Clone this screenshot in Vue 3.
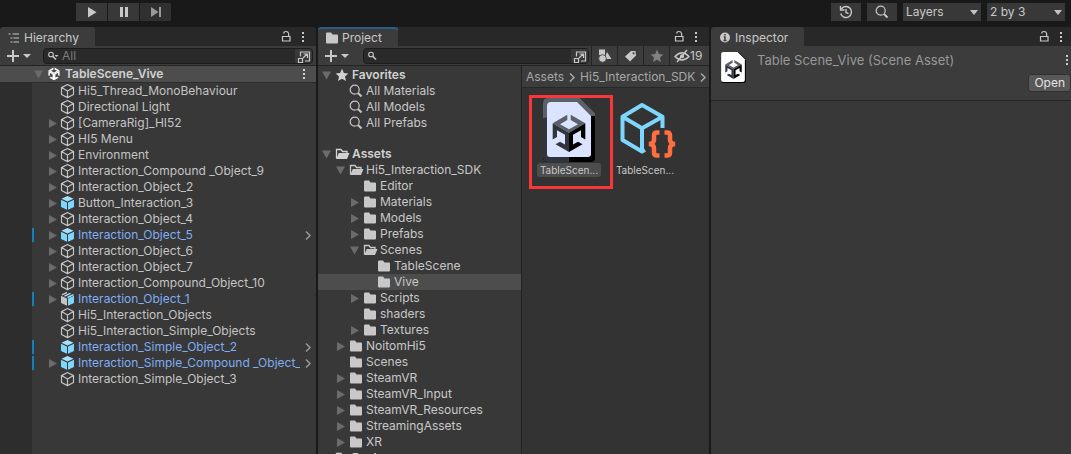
<script setup>
import { ref } from 'vue'

const objects = [
  { name: 'Hi5_Thread_MonoBehaviour', icon: 'cube' },
  { name: 'Directional Light', icon: 'cube' },
  { name: '[CameraRig]_HI52', icon: 'cube', parent: true },
  { name: 'HI5 Menu', icon: 'cube', parent: true },
  { name: 'Environment', icon: 'cube', parent: true },
  { name: 'Interaction_Compound _Object_9', icon: 'cube', parent: true },
  { name: 'Interaction_Object_2', icon: 'cube', parent: true },
  { name: 'Button_Interaction_3', icon: 'prefab', parent: true },
  { name: 'Interaction_Object_4', icon: 'cube', parent: true },
  { name: 'Interaction_Object_5', icon: 'prefab', parent: true, linked: true, open: true },
  { name: 'Interaction_Object_6', icon: 'cube', parent: true },
  { name: 'Interaction_Object_7', icon: 'cube', parent: true },
  { name: 'Interaction_Compound_Object_10', icon: 'cube', parent: true },
  { name: 'Interaction_Object_1', icon: 'variant', parent: true, linked: true },
  { name: 'Hi5_Interaction_Objects', icon: 'cube' },
  { name: 'Hi5_Interaction_Simple_Objects', icon: 'cube' },
  { name: 'Interaction_Simple_Object_2', icon: 'prefab', linked: true, open: true },
  { name: 'Interaction_Simple_Compound _Object_1', icon: 'prefab', parent: true, linked: true, open: true },
  { name: 'Interaction_Simple_Object_3', icon: 'cube' }
]

const folders = [
  { name: 'Favorites', icon: 'star', depth: 0, state: 'down', bold: true },
  { name: 'All Materials', icon: 'lens', depth: 1 },
  { name: 'All Models', icon: 'lens', depth: 1 },
  { name: 'All Prefabs', icon: 'lens', depth: 1, last: true },
  { name: 'Assets', icon: 'folder-open', depth: 0, state: 'down', bold: true },
  { name: 'Hi5_Interaction_SDK', icon: 'folder-open', depth: 1, state: 'down' },
  { name: 'Editor', icon: 'folder', depth: 2 },
  { name: 'Materials', icon: 'folder', depth: 2, state: 'right' },
  { name: 'Models', icon: 'folder', depth: 2, state: 'right' },
  { name: 'Prefabs', icon: 'folder', depth: 2, state: 'right' },
  { name: 'Scenes', icon: 'folder-open', depth: 2, state: 'down' },
  { name: 'TableScene', icon: 'folder', depth: 3 },
  { name: 'Vive', icon: 'folder', depth: 3, selected: true },
  { name: 'Scripts', icon: 'folder', depth: 2, state: 'right' },
  { name: 'shaders', icon: 'folder', depth: 2 },
  { name: 'Textures', icon: 'folder', depth: 2, state: 'right' },
  { name: 'NoitomHi5', icon: 'folder', depth: 1, state: 'right' },
  { name: 'Scenes', icon: 'folder', depth: 1 },
  { name: 'SteamVR', icon: 'folder', depth: 1, state: 'right' },
  { name: 'SteamVR_Input', icon: 'folder', depth: 1, state: 'right' },
  { name: 'SteamVR_Resources', icon: 'folder', depth: 1, state: 'right' },
  { name: 'StreamingAssets', icon: 'folder', depth: 1, state: 'right' },
  { name: 'XR', icon: 'folder', depth: 1, state: 'right' },
  { name: 'Packages', icon: 'folder-open', depth: 0, state: 'down', bold: true }
]

const hierarchyQuery = ref('')
const projectQuery = ref('')
</script>

<template>
  <div class="editor">
    <svg class="defs" aria-hidden="true">
      <symbol id="cube" viewBox="0 0 16 16">
        <path d="M7.500 1.500 13.500 4.600v6.900L7.500 14.600 1.500 11.500V4.600zM1.500 4.600 7.500 8l6-3.400M7.500 8v6.600" fill="none" stroke="currentColor" stroke-width="1.200" stroke-linejoin="round" />
      </symbol>
      <symbol id="prefab" viewBox="0 0 16 16">
        <path d="M7.500 1 13.500 3.700 7.500 6.500 1.500 3.700z" fill="#a5e1ff" />
        <path d="M1 4.800 7 7.600v7.200l-6-2.800zM14 4.800l-6 2.800v7.200l6-2.800z" fill="#7fd6fd" />
      </symbol>
      <symbol id="variant" viewBox="0 0 16 16">
        <path d="M1 4.800 7 7.600v7.200l-6-2.800z" fill="#c4c4c4" />
        <path d="M14 4.800l-6 2.800v7.200l6-2.800z" fill="#7fd6fd" />
        <path d="M2 3.800 7 1.500" stroke="#c4c4c4" stroke-width="1.400" />
        <path d="M4.500 5.200l6-2.800M7.500 6.500l6-2.800" stroke="#a5e1ff" stroke-width="1.400" />
      </symbol>
      <symbol id="down" viewBox="0 0 16 16"><path d="M4 4.500h9L8.500 12.500z" fill="currentColor" /></symbol>
      <symbol id="right" viewBox="0 0 16 16"><path d="M5 4v9l8-4.500z" fill="currentColor" /></symbol>
      <symbol id="folder" viewBox="0 0 16 16"><path d="M2 3.500q0-1 1-1h4l1.500 2H13q1 0 1 1v7q0 1-1 1H3q-1 0-1-1z" fill="currentColor" /></symbol>
      <symbol id="folder-open" viewBox="0 0 16 16">
        <path d="M2.500 12.500v-9H7l1.500 2h4.500v1.500" fill="none" stroke="currentColor" stroke-width="1.300" />
        <path d="M4.800 7H15.500l-2.500 6H2.200z" fill="currentColor" />
      </symbol>
      <symbol id="star" viewBox="0 0 16 16"><path d="M8 1.800 9.900 6l4.400.5-3.300 3 1 4.500L8 11.800 4 14l1-4.500-3.300-3L6.100 6z" fill="currentColor" /></symbol>
      <symbol id="lens" viewBox="0 0 16 16">
        <circle cx="6.700" cy="6.700" r="4.500" fill="none" stroke="currentColor" stroke-width="1.200" />
        <path d="M10 10 13.500 13.500" stroke="currentColor" stroke-width="2" />
      </symbol>
      <symbol id="find" viewBox="0 0 12 12">
        <circle cx="4" cy="4.500" r="2.300" fill="none" stroke="currentColor" stroke-width="1.100" />
        <path d="M5.600 6.100 9 9.500" stroke="currentColor" stroke-width="1.500" />
      </symbol>
      <symbol id="lock" viewBox="0 0 16 16">
        <path d="M4.500 7.500h7.500v4.500H4.500zM5.800 4.500q0-2 2.200-2t2.600 2v3" fill="none" stroke="currentColor" stroke-width="1.200" />
      </symbol>
      <symbol id="kebab" viewBox="0 0 16 16">
        <path d="M7 3h2v2H7zM7 7h2v2H7zM7 11h2v2H7z" fill="currentColor" />
      </symbol>
      <symbol id="add" viewBox="0 0 26 16">
        <path d="M8 2v12M2 8h12" stroke="currentColor" stroke-width="2" />
        <path d="M18 6h8l-4 4z" fill="currentColor" />
      </symbol>
      <symbol id="expand" viewBox="0 0 16 16">
        <path d="M4.500 7.500V3h9v9H9M2.500 9.500h4v4h-4zM7 9l4-4M7.500 5H11.500V9" fill="none" stroke="currentColor" stroke-width="1.200" />
      </symbol>
      <symbol id="chevron" viewBox="0 0 16 16"><path d="M6 4.500l4 4-4 4" fill="none" stroke="currentColor" stroke-width="1.500" /></symbol>
      <symbol id="logo" viewBox="8 15 36 41">
        <path class="face-top" d="M9.700 25.300 24.300 16.700V22L17 26.200l9 5.100 9-5.100-7.300-4.200v-5.300l14.600 8.600L26 34.700z" />
        <path class="face-left" d="M9.700 25.300 26 34.700V54L12.500 46.300 17 43.700l5 2.800v-9.700l-8-4.600V39l-4.300 2.500z" />
        <path class="face-right" d="M42.300 25.300 26 34.700V54l13.500-7.700L35 43.700l-5 2.800v-9.700l8-4.600V39l4.300 2.500z" />
      </symbol>
      <symbol id="scene-file" viewBox="0 0 52 64">
        <path d="M5 0H37L52 15V60q0 4-4 4H5q-5 0-5-5V5q0-5 5-5z" fill="#000" />
        <path d="M26 64H5q-5 0-5-5V20h26z" fill="#30343c" />
        <path d="M0 20V5q0-5 5-5H37L52 15V18H30z" fill="#5b6069" />
        <path d="M8 4H34L48 18V56q0 3-3 3H7q-3 0-3-3V8q0-4 4-4z" fill="#dbe4ff" />
      </symbol>
    </svg>

    <header class="topbar">
      <div class="playback">
        <button aria-label="Play"><svg viewBox="0 0 16 16"><path d="M4 3v10.500l8.500-5.250z" fill="currentColor" /></svg></button>
        <button aria-label="Pause"><svg viewBox="0 0 16 16"><path d="M4 3h3v10H4zM9 3h3v10H9z" fill="currentColor" /></svg></button>
        <button aria-label="Step" class="dim"><svg viewBox="0 0 16 16"><path d="M3 3v10l7.500-5zM11 3h2v10h-2z" fill="currentColor" /></svg></button>
      </div>
      <div class="top-tools">
        <button aria-label="Undo history">
          <svg viewBox="0 0 16 16"><path d="M3.500 4.800A5.500 5.500 0 1 1 2.700 9.500M2.500 2v4h4M8 5v3.500l2.500 1.200" fill="none" stroke="currentColor" stroke-width="1.400" /></svg>
        </button>
        <button aria-label="Search"><svg><use href="#lens" /></svg></button>
        <div class="picker"><select aria-label="Layers"><option>Layers</option></select></div>
        <div class="picker"><select aria-label="Layout"><option>2 by 3</option></select></div>
      </div>
    </header>

    <main class="panels">
      <section class="panel">
        <div class="tabstrip">
          <button class="tab">
            <svg viewBox="0 0 16 16"><path d="M6.500 4H13M7.500 8H13M7.500 12H13M2.500 4h2M4.500 8h2M4.500 12h2" stroke="currentColor" stroke-width="1.200" /></svg>Hierarchy
          </button>
          <button class="tool" aria-label="Lock hierarchy"><svg><use href="#lock" /></svg></button>
          <button class="tool" aria-label="Hierarchy menu"><svg><use href="#kebab" /></svg></button>
        </div>
        <div class="toolbar">
          <button class="add" aria-label="Create object"><svg><use href="#add" /></svg></button>
          <div class="search search-hierarchy">
            <svg class="find" viewBox="0 0 14 12"><circle cx="4" cy="4.500" r="2.300" fill="none" stroke="currentColor" stroke-width="1.100" /><path d="M5.600 6.100 9 9.500" stroke="currentColor" stroke-width="1.500" /><path d="M7.500 5h4l-2 2z" fill="currentColor" /></svg>
            <input v-model="hierarchyQuery" aria-label="Search hierarchy" placeholder="All">
            <button class="tool" aria-label="Open hierarchy search"><svg><use href="#expand" /></svg></button>
          </div>
        </div>
        <div class="scene-row">
          <button class="toggle" aria-label="Collapse scene"><svg><use href="#down" /></svg></button>
          <svg class="scene-logo"><use href="#logo" /></svg>
          <span class="label">TableScene_Vive</span>
          <button class="tool" aria-label="Scene menu"><svg><use href="#kebab" /></svg></button>
        </div>
        <ul class="objects">
          <li v-for="item in objects" :key="item.name" :class="{ linked: item.linked }">
            <button v-if="item.parent" class="toggle" :aria-label="'Expand ' + item.name"><svg><use href="#right" /></svg></button>
            <span v-else class="toggle"></span>
            <svg><use :href="'#' + item.icon" /></svg>
            <span class="label">{{ item.name }}</span>
            <button v-if="item.open" class="enter" :aria-label="'Open ' + item.name"><svg><use href="#chevron" /></svg></button>
            <span v-else class="enter"></span>
          </li>
        </ul>
      </section>

      <section class="panel">
        <div class="tabstrip">
          <button class="tab focused"><svg><use href="#folder" /></svg>Project</button>
          <button class="tool" aria-label="Lock project"><svg><use href="#lock" /></svg></button>
          <button class="tool" aria-label="Project menu"><svg><use href="#kebab" /></svg></button>
        </div>
        <div class="toolbar">
          <button class="add" aria-label="Create asset"><svg><use href="#add" /></svg></button>
          <div class="search">
            <svg class="find"><use href="#find" /></svg>
            <input v-model="projectQuery" aria-label="Search project">
            <button class="tool" aria-label="Open project search"><svg><use href="#expand" /></svg></button>
          </div>
          <div class="filters">
            <button aria-label="Search by type"><svg viewBox="0 0 16 16"><path d="M2 1.500h6v5.500H2zM10 4l4.500 7H7.500z" fill="currentColor" /><circle cx="5.500" cy="10.500" r="3.800" fill="currentColor" stroke="#3c3c3c" stroke-width=".8" /></svg></button>
            <button aria-label="Search by label"><svg viewBox="0 0 16 16"><path fill-rule="evenodd" d="M8 3 12.500 3l.5 4.500L7 13.500 2 8.500zM10.500 4.300a1 1 0 1 0 .1 0z" fill="currentColor" /></svg></button>
            <button aria-label="Save search" class="faded"><svg><use href="#star" /></svg></button>
            <button class="hidden-count" aria-label="Hidden packages, 19">
              <svg viewBox="0 0 16 16"><path d="M1 8.500Q8 1 15 8.500 8 15.500 1 8.500zM3 14 13 2" fill="none" stroke="currentColor" stroke-width="1.400" /><circle cx="8" cy="8.300" r="2" fill="currentColor" /></svg>19
            </button>
          </div>
        </div>
        <div class="browser">
          <ul class="folders">
            <li v-for="(item, i) in folders" :key="i" :class="['depth-' + item.depth, { bold: item.bold, selected: item.selected, last: item.last }]">
              <button v-if="item.state" class="toggle" :aria-label="'Toggle ' + item.name"><svg><use :href="'#' + item.state" /></svg></button>
              <span v-else class="toggle"></span>
              <svg><use :href="'#' + item.icon" /></svg>
              <span class="label">{{ item.name }}</span>
            </li>
          </ul>
          <div class="contents">
            <nav class="crumbs" aria-label="Folder path">
              <a href="#assets">Assets</a>
              <svg><use href="#chevron" /></svg>
              <a href="#sdk">Hi5_Interaction_SDK</a>
              <svg><use href="#chevron" /></svg>
            </nav>
            <div class="assets">
              <button class="asset chosen">
                <svg class="art" viewBox="0 0 56 64">
                  <use href="#scene-file" x="2" width="52" height="64" />
                  <use class="logo-shaded" href="#logo" x="10" y="15" width="36" height="41" />
                </svg>
                <span>TableScen...</span>
              </button>
              <button class="asset">
                <svg class="art art-prefab" viewBox="0 0 56 64">
                  <path d="M42.500 30V18.700L22 7 2.500 18.700V42L22 53.500l3-1.500M2.500 18.700 22 30.300l20.500-11.600M22 30.300v23" fill="none" stroke="#7fd6fd" stroke-width="4" stroke-linejoin="round" />
                  <path d="M39.500 34.500H37q-3 0-3 3V42q0 3.500-5 4 5 .5 5 4v4.500q0 3 3 3h2.500M44.500 34.500H47q3 0 3 3V42q0 3.500 5 4-5 .5-5 4v4.500q0 3-3 3h-2.500" fill="none" stroke="#ff6e40" stroke-width="4.500" />
                </svg>
                <span>TableScen...</span>
              </button>
            </div>
          </div>
        </div>
      </section>

      <section class="panel">
        <div class="tabstrip tabstrip-inspector">
          <button class="tab">
            <svg viewBox="0 0 16 16"><circle cx="8" cy="7.500" r="5" fill="currentColor" /><path d="M8 3.900v1.700M6.800 7H8v3.500M6.500 10.500h3" fill="none" stroke="#3c3c3c" stroke-width="1.400" /></svg>Inspector
          </button>
          <button class="tool" aria-label="Lock inspector"><svg><use href="#lock" /></svg></button>
          <button class="tool" aria-label="Inspector menu"><svg><use href="#kebab" /></svg></button>
        </div>
        <div class="inspected">
          <svg class="file-icon" viewBox="0 0 24 30">
            <path d="M2 0H17l7 7v21q0 2-2 2H2q-2 0-2-2V2q0-2 2-2z" fill="#000" />
            <path d="M2 0H16l7 7v20q0 2-2 2H2q-2 0-2-2V2q0-2 2-2z" fill="#fff" />
            <use class="logo-shaded" href="#logo" x="3" y="7" width="18" height="20" />
          </svg>
          <h1>Table Scene_Vive (Scene Asset)</h1>
          <div class="actions">
            <button class="tool" aria-label="Asset menu"><svg><use href="#kebab" /></svg></button>
            <button class="open">Open</button>
          </div>
        </div>
      </section>
    </main>
  </div>
</template>

<style>
body {
  background: #191919;
}
</style>

<style scoped>
.editor {
  display: flex;
  flex-direction: column;
  height: 100vh;
  overflow: hidden;
  background: #191919;
  color: #c8c8c8;
  font: 12px/16px Inter, "Liberation Sans", sans-serif;
}
.defs { position: absolute; width: 0; height: 0; }
svg { width: 16px; height: 16px; flex: none; display: block; }
ul { list-style: none; margin: 0; padding: 0; }
button, input, select { font: inherit; color: inherit; background: none; border: 0; margin: 0; padding: 0; outline: 0; }
a { color: inherit; text-decoration: none; }
.label { overflow: hidden; white-space: nowrap; flex: 1; }

.topbar { display: flex; justify-content: space-between; padding: 3px 6px 6px 76px; }
.playback { display: flex; gap: 1px; }
.playback button { width: 31px; height: 18px; display: grid; place-items: center; background: #383838; }
.playback .dim { color: #999; background: #303030; }
.top-tools { display: flex; gap: 6px; }
.top-tools button { width: 30px; height: 18px; display: grid; place-items: center; background: #383838; }
.picker { position: relative; background: #383838; width: 78px; height: 18px; }
.picker select { appearance: none; width: 100%; height: 18px; padding: 0 3px; }
.picker::after {
  content: "";
  position: absolute;
  right: 3px;
  top: 7px;
  border: 4px solid transparent;
  border-top: 5px solid #c4c4c4;
  border-bottom: 0;
  pointer-events: none;
}

.panels { flex: 1; min-height: 0; display: grid; grid-template-columns: 316fr 391fr 360fr; grid-template-rows: minmax(0, 1fr); gap: 2px; }
.panel { display: flex; flex-direction: column; min-width: 0; overflow: hidden; background: #383838; border-radius: 3px 3px 0 0; }
.tabstrip { display: flex; align-items: center; height: 19px; flex: none; background: #282828; padding-right: 5px; }
.tabstrip-inspector { padding-right: 2px; }
.tab { display: flex; align-items: center; gap: 2px; height: 19px; margin-right: auto; padding: 2px 16px 0 6px; background: #3c3c3c; border-radius: 3px 3px 0 0; }
.tab.focused { box-shadow: inset 0 2px #2c5d87; }
.tool { width: 17px; height: 16px; display: grid; place-items: center; }
.toolbar { display: flex; align-items: center; height: 20px; box-sizing: border-box; flex: none; background: #3c3c3c; border-bottom: 1px solid #232323; }
.add svg { width: 26px; }
.add { margin-left: 5px; }
.search { display: flex; align-items: center; flex: 1; min-width: 0; margin-left: 14px; height: 16px; box-sizing: border-box; background: #2a2a2a; border: 1px solid #1c1c1c; border-radius: 4px; }
.search-hierarchy { margin-left: 12px; margin-right: 3px; }
.search input { flex: 1; min-width: 0; height: 14px; padding: 0 1px; }
.search input::placeholder { color: #7c7c7c; opacity: 1; }
.search .find { width: 12px; height: 12px; margin-left: 3px; }
.search-hierarchy .find { width: 14px; }
.search .tool { height: 14px; background: #383838; border-radius: 0 3px 3px 0; }
.filters { display: flex; margin-left: 2px; }
.filters button { display: grid; place-items: center; width: 26px; height: 19px; box-sizing: border-box; border-left: 1px solid #232323; }
.filters .faded { color: #808080; }
.filters .hidden-count { display: flex; align-items: center; width: 40px; padding-left: 4px; }

.scene-row { display: flex; align-items: center; height: 16px; flex: none; padding: 0 4px 0 30px; background: #4d4d4d; border-bottom: 1px solid #2c2c2c; font-weight: 600; color: #d2d2d2; }
.scene-row .toggle { width: 17px; }
.scene-logo { width: 14px; height: 14px; margin: 0 4px 0 0; fill: #fff; }
.toggle { color: #6b6b6b; width: 16px; height: 16px; flex: none; }
.objects { flex: 1; border-left: 32px solid #2d2d2d; }
.objects li { display: flex; align-items: center; height: 16px; padding-left: 12px; position: relative; color: #c4c4c4; }
.objects li.linked::before { content: ""; position: absolute; left: 0; top: 1px; width: 2px; height: 14px; background: #0f81be; }
.objects .linked .label { color: #7fadf0; }
.objects .label { padding-left: 2px; }
.enter { width: 16px; height: 16px; flex: none; color: #999; }

.browser { display: grid; grid-template-columns: 203fr 188fr; flex: 1; min-height: 0; }
.folders { overflow: hidden; padding-top: 1px; }
.folders li { display: flex; align-items: center; height: 16px; }
.folders .label { padding-left: 2px; }
.folders .bold { font-weight: 600; color: #d2d2d2; }
.folders .selected { background: #4d4d4d; }
.folders .last { margin-bottom: 15px; }
.depth-1 { padding-left: 14px; }
.depth-2 { padding-left: 28px; }
.depth-3 { padding-left: 42px; }
.contents { min-width: 0; overflow: hidden; background: #333; border-left: 1px solid #232323; }
.crumbs { display: flex; align-items: center; height: 20px; padding: 1px 0 0 4px; background: #3c3c3c; border-bottom: 1px solid #282828; color: #a8a8a8; white-space: nowrap; overflow: hidden; }
.assets { display: flex; gap: 10px; padding: 10px 0 0 14px; }
.asset { display: flex; flex-direction: column; align-items: center; width: 66px; font-size: 10px; line-height: 14px; position: relative; }
.asset .art { width: 56px; height: 64px; }
.asset span { margin-top: 1px; padding: 0 3px; border-radius: 3px; }
.asset.chosen span { background: #4d4d4d; }
.asset.chosen::after { content: ""; position: absolute; inset: -3px -11px -12px -7px; border: 3px solid #fb3639; }
.asset .art-prefab { align-self: flex-end; margin-right: 2px; }
.logo-shaded { --top: #5b6069; --left: #30343c; --right: #000; }
.face-top { fill: var(--top, #fff); }
.face-left { fill: var(--left, #fff); }
.face-right { fill: var(--right, #fff); }

.inspected { display: flex; align-items: flex-start; background: #3c3c3c; border-bottom: 1px solid #232323; padding: 6px 0 8px 10px; }
.file-icon { width: 25px; height: 31px; }
h1 { flex: 1; margin: 0 0 0 11px; font-size: 13px; line-height: 16px; font-weight: 400; color: #989898; white-space: nowrap; }
.actions { display: flex; flex-direction: column; align-items: flex-end; gap: 6px; }
.actions .tool { width: 12px; }
.open { padding: 0 5px; height: 18px; background: #585858; border: 1px solid #303030; border-radius: 3px; color: #e4e4e4; }
</style>
